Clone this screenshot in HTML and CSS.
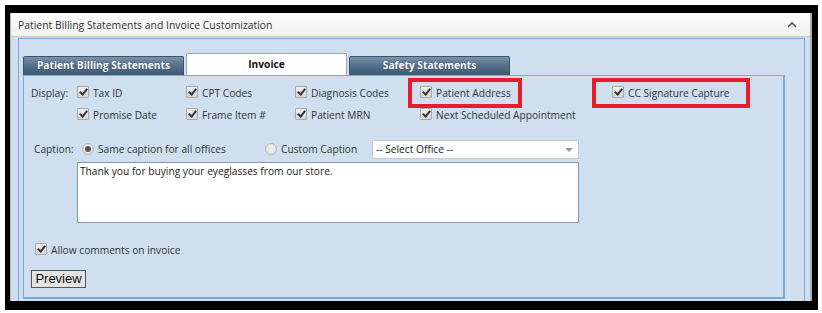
FILE: index.html
```html
<!DOCTYPE html>
<html lang="en">
<head>
    <meta charset="UTF-8">
    <title>Patient Billing Statements and Invoice Customization</title>
    <link rel="stylesheet" href="styles.css">
</head>
<body>
  <div class="frame">
    <div class="panel">
        <div class="panel-header">
            <span>Patient Billing Statements and Invoice Customization</span>
            <svg class="chevron" width="10" height="7" viewBox="0 0 10 7"><path d="M1 6 L5 2 L9 6" fill="none" stroke="#555" stroke-width="1.6"/></svg>
        </div>
        <div class="panel-body">
            <div class="inner">
                <div class="tabs">
                    <div class="tab">Patient Billing Statements</div>
                    <div class="tab active">Invoice</div>
                    <div class="tab">Safety Statements</div>
                </div>
                <div class="tab-content">
                    <div class="display-row">
                        <span class="lbl display-lbl">Display:</span>
                        <div class="options">
                            <span class="opt"><span class="cb"></span>Tax ID</span>
                            <span class="opt"><span class="cb"></span>CPT Codes</span>
                            <span class="opt"><span class="cb"></span>Diagnosis Codes</span>
                            <span class="opt mark mark-a"><span class="cb"></span>Patient Address</span>
                            <span class="opt mark mark-b"><span class="cb"></span>CC Signature Capture</span>
                            <span class="opt"><span class="cb"></span>Promise Date</span>
                            <span class="opt"><span class="cb"></span>Frame Item #</span>
                            <span class="opt"><span class="cb"></span>Patient MRN</span>
                            <span class="opt"><span class="cb"></span>Next Scheduled Appointment</span>
                        </div>
                    </div>

                    <div class="caption-row">
                        <span class="lbl caption-lbl">Caption:</span>
                        <span class="opt radio-opt"><span class="rb on"></span>Same caption for all offices</span>
                        <span class="opt radio-opt custom"><span class="rb"></span>Custom Caption</span>
                        <div class="select">-- Select Office --<span class="arrow"></span></div>
                    </div>
                    <div class="caption-text">Thank you for buying your eyeglasses from our store.</div>

                    <div class="allow-row">
                        <span class="opt"><span class="cb"></span>Allow comments on invoice</span>
                    </div>
                    <div class="btn-row">
                        <span class="btn">Preview</span>
                    </div>
                </div>
            </div>
        </div>
    </div>
  </div>
</body>
</html>
```

FILE: styles.css
```css
body {
    margin: 0;
    background-color: white;
    font-family: "Open Sans", "Noto Sans", sans-serif;
    font-size: 10.2px;
    color: #333;
}
.frame {
    margin: 5px 0 0 5px;
    width: 802px;
    height: 288px;
    border-style: solid;
    border-color: #000;
    border-width: 8px 6px 9px 5px;
    overflow: hidden;
}
.panel {
    height: 100%;
    border-left: 1px solid #b5b5b5;
    border-right: 2px solid #b0b0b0;
    box-sizing: border-box;
    display: flex;
    flex-direction: column;
}
.panel-header {
    height: 23px;
    background: linear-gradient(#fbfbfb, #f1f1f1);
    border-bottom: 1px solid #c8c8c8;
    display: flex;
    align-items: center;
    justify-content: space-between;
    padding: 0 13px 0 7px;
    color: #333;
    font-size: 10.4px;
}
.chevron {
    margin-top: -1px;
}
.panel-body {
    flex: 1;
    background-color: #cfdfef;
    padding: 1px 5px 0 7px;
    display: flex;
}
.inner {
    flex: 1;
    border: 1px solid #7aa7dc;
    border-bottom: none;
    padding: 14px 19px 0 4px;
}
.tabs {
    display: flex;
    align-items: flex-end;
    height: 22px;
}
.tab {
    width: 159px;
    height: 18px;
    margin-right: 2px;
    background: linear-gradient(#7a92aa, #56718d 45%, #3e5873);
    border: 1px solid #3b536b;
    border-bottom: none;
    border-radius: 2px 2px 0 0;
    color: white;
    font-weight: bold;
    text-align: center;
    line-height: 16px;
    text-shadow: 0 0 1px #1d2f40;
}
.tab.active {
    height: 21px;
    background: white;
    border-color: #9ab;
    color: #111;
    text-shadow: none;
    line-height: 21px;
}
.tab-content {
    height: 224px;
    border: 1px solid #7aa7dc;
    border-right-width: 2px;
    border-bottom-width: 2px;
    padding: 6px 0 0 7px;
    box-sizing: border-box;
}
.display-row {
    display: flex;
}
.lbl {
    line-height: 22px;
}
.display-lbl {
    width: 46px;
}
.options {
    display: grid;
    grid-template-columns: 109px 109px 125px 192px auto;
    grid-auto-rows: 22px;
    justify-items: start;
}
.opt {
    display: inline-flex;
    align-items: center;
    white-space: nowrap;
    position: relative;
    height: 22px;
}
.cb {
    width: 10px;
    height: 10px;
    margin-right: 4px;
    border: 1px solid #a8a8a8;
    border-radius: 1px;
    background: linear-gradient(#f0f0f0, #d6d6d6);
    position: relative;
    margin-top: -2px;
}
.cb::after {
    content: "";
    position: absolute;
    left: 3px;
    top: 0px;
    width: 3px;
    height: 6px;
    border: solid #333;
    border-width: 0 2px 2px 0;
    transform: rotate(40deg);
}
.mark::after {
    content: "";
    position: absolute;
    top: -4px;
    bottom: -4px;
    border: 4px solid #ea1c2a;
}
.mark-a::after {
    left: -12px;
    right: -11px;
}
.mark-b::after {
    left: -20px;
    right: -20px;
}
.caption-row {
    display: flex;
    align-items: center;
    margin-top: 13px;
    height: 20px;
    padding-left: 3px;
}
.caption-lbl {
    width: 48px;
}
.radio-opt {
    width: 183px;
}
.radio-opt.custom {
    width: 107px;
}
.rb {
    width: 10px;
    height: 10px;
    margin-right: 4px;
    border: 1px solid #b8b8b8;
    border-radius: 50%;
    background: radial-gradient(#f2f2f2, #dcdcdc);
    position: relative;
}
.rb.on::after {
    content: "";
    position: absolute;
    left: 2px;
    top: 2px;
    width: 6px;
    height: 6px;
    border-radius: 50%;
    background: #555;
}
.select {
    width: 202px;
    height: 17px;
    line-height: 17px;
    border: 1px solid #c6ccd4;
    background: white;
    padding-left: 3px;
    position: relative;
    color: #222;
}
.select .arrow {
    position: absolute;
    right: 5px;
    top: 7px;
    border-style: solid;
    border-width: 4px 4px 0 4px;
    border-color: #999 transparent transparent transparent;
}
.caption-text {
    margin: 3px 0 0 46px;
    width: 496px;
    height: 57px;
    border: 1px solid #8399b7;
    background: white;
    padding: 1px 2px;
    color: #222;
}
.allow-row {
    margin-top: 16px;
    padding-left: 4px;
}
.btn-row {
    margin-top: 9px;
}
.btn {
    display: inline-block;
    width: 53px;
    height: 16px;
    line-height: 16px;
    border: 1px solid #555;
    background: #e4e4e4;
    font-family: "Liberation Sans", Arial, sans-serif;
    font-size: 13px;
    text-align: center;
    color: #111;
}
```
